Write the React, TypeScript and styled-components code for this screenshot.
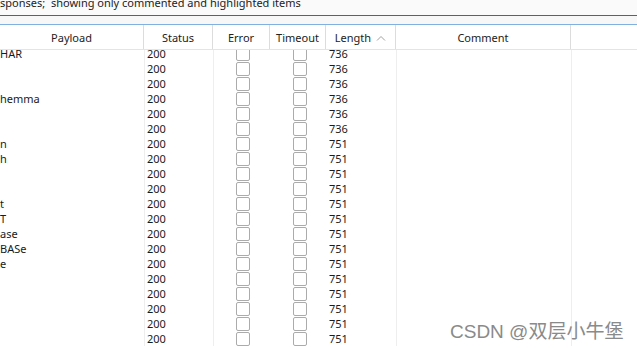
import styled, { createGlobalStyle } from "styled-components";

const GlobalStyle = createGlobalStyle`
  html, body {
    margin: 0;
    padding: 0;
    background: #ffffff;
  }
  body {
    font-family: "Noto Sans", "Open Sans", sans-serif;
    font-size: 11px;
    color: #222;
  }
`;

const rows: { payload: string; status: string; length: string }[] = [
  { payload: "HAR", status: "200", length: "736" },
  { payload: "", status: "200", length: "736" },
  { payload: "", status: "200", length: "736" },
  { payload: "hemma", status: "200", length: "736" },
  { payload: "", status: "200", length: "736" },
  { payload: "", status: "200", length: "736" },
  { payload: "n", status: "200", length: "751" },
  { payload: "h", status: "200", length: "751" },
  { payload: "", status: "200", length: "751" },
  { payload: "", status: "200", length: "751" },
  { payload: "t", status: "200", length: "751" },
  { payload: "T", status: "200", length: "751" },
  { payload: "ase", status: "200", length: "751" },
  { payload: "BASe", status: "200", length: "751" },
  { payload: "e", status: "200", length: "751" },
  { payload: "", status: "200", length: "751" },
  { payload: "", status: "200", length: "751" },
  { payload: "", status: "200", length: "751" },
  { payload: "", status: "200", length: "751" },
  { payload: "", status: "200", length: "751" },
];

const COLUMNS = "144px 69px 57px 56px 70px 175px 1fr";

export default function App() {
  return (
    <>
      <GlobalStyle />
      <Page>
        <FilterBar>
          <FilterText>sponses;&nbsp; showing only commented and highlighted items</FilterText>
        </FilterBar>
        <Spacer />
        <Table>
          <HeaderRow>
            <HeaderCell>Payload</HeaderCell>
            <HeaderCell>Status</HeaderCell>
            <HeaderCell>Error</HeaderCell>
            <HeaderCell>Timeout</HeaderCell>
            <HeaderCell>
              Length
              <SortIcon width="10" height="6" viewBox="0 0 10 6">
                <path d="M1 5.5 L5 1.5 L9 5.5" fill="none" stroke="#a0a0a0" strokeWidth="1" />
              </SortIcon>
            </HeaderCell>
            <HeaderCell>Comment</HeaderCell>
            <HeaderCell $last />
          </HeaderRow>
          <Body>
            <RowList>
              {rows.map((r, i) => (
                <Row key={i}>
                  <TextCell>{r.payload}</TextCell>
                  <TextCell $ruled>{r.status}</TextCell>
                  <BoxCell $ruled>
                    <CheckBox />
                  </BoxCell>
                  <BoxCell>
                    <CheckBox />
                  </BoxCell>
                  <TextCell>{r.length}</TextCell>
                  <TextCell $ruled />
                  <TextCell $ruled />
                </Row>
              ))}
            </RowList>
          </Body>
        </Table>
        <Watermark>CSDN @双层小牛堡</Watermark>
      </Page>
    </>
  );
}

const Page = styled.div`
  position: relative;
  width: 637px;
  height: 348px;
  overflow: hidden;
  background: #ffffff;
`;

const FilterBar = styled.div`
  height: 15px;
  background: #fafafa;
  border-bottom: 1px solid #606060;
  overflow: hidden;
`;

const FilterText = styled.div`
  margin-top: -5px;
  line-height: 16px;
  white-space: nowrap;
  color: #222;
`;

const Spacer = styled.div`
  height: 8px;
  background: #f7f7f7;
  border-bottom: 1px solid #7fb0e0;
`;

const Table = styled.div`
  display: flex;
  flex-direction: column;
`;

const HeaderRow = styled.div`
  position: relative;
  z-index: 1;
  display: grid;
  grid-template-columns: ${COLUMNS};
  height: 24px;
  background: #ffffff;
  border-bottom: 1px solid #e4e4e4;
`;

const HeaderCell = styled.div<{ $last?: boolean }>`
  display: flex;
  align-items: center;
  justify-content: center;
  gap: 5px;
  color: #222;
  border-right: ${(p) => (p.$last ? "none" : "1px solid #dcdcdc")};
`;

const SortIcon = styled.svg`
  display: block;
  margin-top: 1px;
`;

const Body = styled.div`
  overflow: hidden;
  height: 298px;
`;

const RowList = styled.div`
  margin-top: -4px;
`;

const Row = styled.div`
  display: grid;
  grid-template-columns: ${COLUMNS};
  height: 15px;
`;

const TextCell = styled.div<{ $ruled?: boolean }>`
  border-left: ${(p) => (p.$ruled ? "1px solid #eeeeee" : "1px solid transparent")};
  padding-left: 2px;
  line-height: 15px;
  white-space: nowrap;
  overflow: hidden;
  color: #1a1a1a;
  &:first-child {
    border-left: none;
    padding-left: 0;
  }
`;

const BoxCell = styled.div<{ $ruled?: boolean }>`
  display: flex;
  align-items: center;
  justify-content: center;
  padding-left: 2px;
  border-left: ${(p) => (p.$ruled ? "1px solid #eeeeee" : "1px solid transparent")};
`;

const CheckBox = styled.div`
  box-sizing: border-box;
  width: 14px;
  height: 14px;
  border: 1px solid #ababab;
  border-radius: 2px;
  background: #ffffff;
`;

const Watermark = styled.div`
  position: absolute;
  left: 450px;
  top: 316px;
  font-family: "Liberation Sans", "Noto Sans CJK SC", sans-serif;
  font-size: 19px;
  color: #8a8a8a;
  white-space: nowrap;
  text-shadow: 0 0 1px #ffffff, 0 0 1px #ffffff;
`;
